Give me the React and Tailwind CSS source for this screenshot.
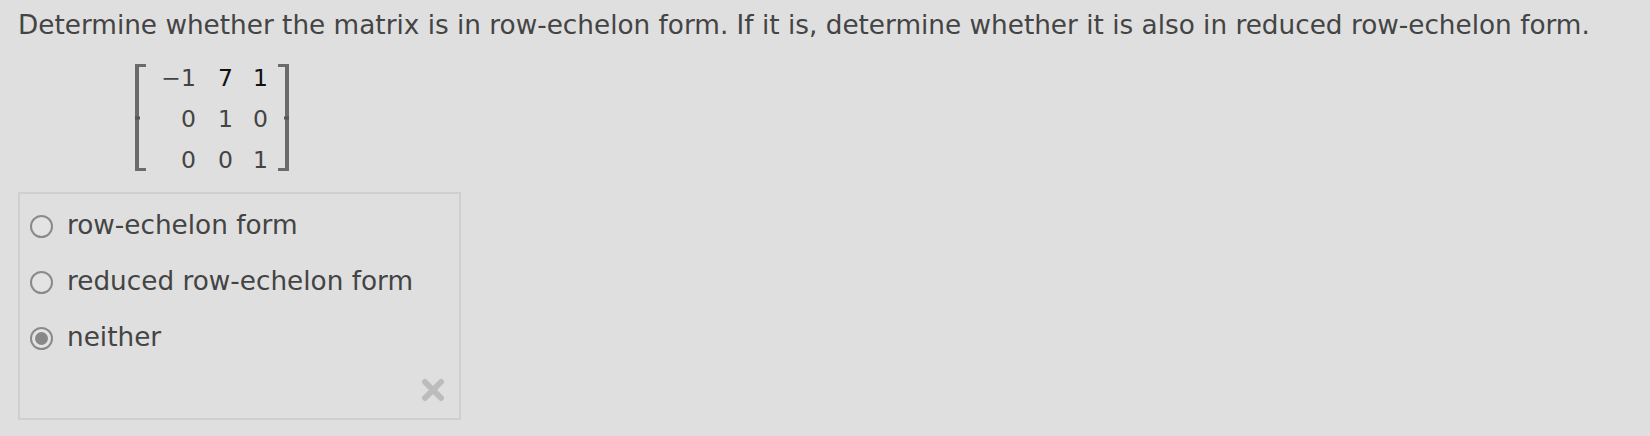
import React from 'react';

const rows = [
  ['\u22121', '7', '1'],
  ['0', '1', '0'],
  ['0', '0', '1'],
];

const options = [
  { label: 'row-echelon form', checked: false },
  { label: 'reduced row-echelon form', checked: false },
  { label: 'neither', checked: true },
];

// stretched bracket: top/bottom hooks plus a darker join at the middle
const Bracket = ({ side }) => (
  <div
    className={`relative w-[11px] self-stretch border-y-[3px] border-solid border-[#6b6b6b] ${
      side === 'left' ? 'border-l-[4px]' : 'border-r-[4px]'
    }`}
  >
    <span
      className={`absolute top-1/2 h-[3px] w-[5px] -translate-y-1/2 bg-[#555] ${
        side === 'left' ? 'left-[-4px]' : 'right-[-4px]'
      }`}
    />
  </div>
);

const Radio = ({ checked }) => (
  <span className="flex h-[23px] w-[23px] shrink-0 items-center justify-center rounded-full border-2 border-[#8a8a8a] bg-[#e3e3e3]">
    {checked && <span className="h-[13px] w-[13px] rounded-full bg-[#888]" />}
  </span>
);

export default function App() {
  return (
    <div className="min-h-[436px] w-[1650px] bg-[#dfdfdf] px-[18px] pt-[7px] font-['DejaVu_Sans',Verdana,sans-serif] text-[#444]">
      <p className="text-[26.3px] leading-[36px]">
        Determine whether the matrix is in row-echelon form. If it is, determine whether it is also in reduced row-echelon form.
      </p>

      <div className="ml-[117px] mt-[21px] flex h-[107px] w-[154px]">
        <Bracket side="left" />
        <div className="grid grid-cols-[50px_37px_35px] content-start gap-y-[13px] pr-[10px] text-[23.5px] leading-[28px]">
          {rows.flat().map((v, i) => (
            <span key={i} className={`text-right ${i === 1 || i === 2 ? 'text-[#111]' : ''}`}>
              {v}
            </span>
          ))}
        </div>
        <Bracket side="right" />
      </div>

      <div className="mt-[21px] flex h-[228px] w-[443px] flex-col border-2 border-[#cfcfcf] pt-[4px]">
        {options.map((o) => (
          <label key={o.label} className="flex h-[56px] items-center gap-[14px] pl-[10px] text-[26.3px]">
            <Radio checked={o.checked} />
            <span>{o.label}</span>
          </label>
        ))}
        <div className="mt-auto flex justify-end pb-[16px] pr-[14px]">
          <svg width="24" height="24" viewBox="0 0 24 24">
            <path d="M4 4 L20 20 M20 4 L4 20" stroke="#bcbcbc" strokeWidth="6" strokeLinecap="round" />
          </svg>
        </div>
      </div>
    </div>
  );
}
